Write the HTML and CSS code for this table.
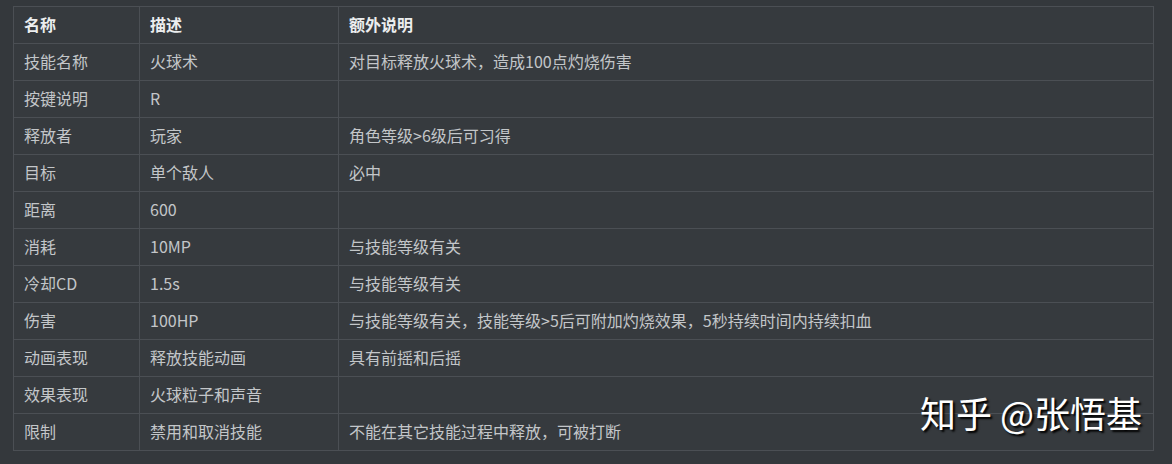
FILE: index.html
```html
<!DOCTYPE html>
<html lang="zh">
<head>
<meta charset="utf-8">
<link rel="stylesheet" href="styles.css">
</head>
<body>
<div class="page">
  <table class="skill">
    <colgroup><col class="c1"><col class="c2"><col class="c3"></colgroup>
    <thead>
      <tr><th>名称</th><th>描述</th><th>额外说明</th></tr>
    </thead>
    <tbody>
      <tr><td>技能名称</td><td>火球术</td><td>对目标释放火球术，造成100点灼烧伤害</td></tr>
      <tr><td>按键说明</td><td>R</td><td></td></tr>
      <tr><td>释放者</td><td>玩家</td><td>角色等级&gt;6级后可习得</td></tr>
      <tr><td>目标</td><td>单个敌人</td><td>必中</td></tr>
      <tr><td>距离</td><td>600</td><td></td></tr>
      <tr><td>消耗</td><td>10MP</td><td>与技能等级有关</td></tr>
      <tr><td>冷却CD</td><td>1.5s</td><td>与技能等级有关</td></tr>
      <tr><td>伤害</td><td>100HP</td><td>与技能等级有关，技能等级&gt;5后可附加灼烧效果，5秒持续时间内持续扣血</td></tr>
      <tr><td>动画表现</td><td>释放技能动画</td><td>具有前摇和后摇</td></tr>
      <tr><td>效果表现</td><td>火球粒子和声音</td><td></td></tr>
      <tr><td>限制</td><td>禁用和取消技能</td><td>不能在其它技能过程中释放，可被打断</td></tr>
    </tbody>
  </table>
  <div class="watermark">知乎 @张悟基</div>
</div>
</body>
</html>
```
FILE: styles.css
```css
html, body {
  margin: 0;
  padding: 0;
  background: #34383c;
}
.page {
  position: relative;
  width: 1172px;
  height: 464px;
  padding: 6px 0 0 13px;
  box-sizing: border-box;
  font-family: "Noto Sans CJK SC", "Noto Sans", sans-serif;
}
.skill {
  border-collapse: collapse;
  width: 1141px;
  table-layout: fixed;
  background: #363a3e;
  font-size: 16px;
  color: #c3c6c9;
}
.c1 { width: 126px; }
.c2 { width: 199px; }
.skill th, .skill td {
  border: 1px solid #4b4f54;
  height: 37px;
  padding: 0 10px 3px;
  box-sizing: border-box;
  text-align: left;
  vertical-align: middle;
  line-height: 20px;
  white-space: nowrap;
}
.skill th {
  font-weight: bold;
  color: #eceeef;
}
.watermark {
  position: absolute;
  left: 920px;
  top: 388px;
  font-size: 36px;
  line-height: 48px;
  color: #ffffff;
  text-shadow: 2px 2px 2px #000;
}
```
